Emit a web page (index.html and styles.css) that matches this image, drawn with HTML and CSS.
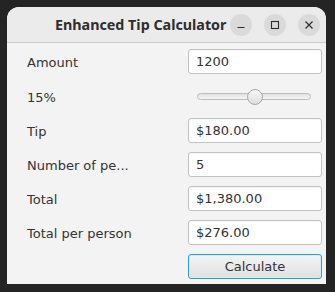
FILE: index.html
```html
<!DOCTYPE html>
<html>
<head>
<meta charset="utf-8">
<link rel="stylesheet" href="styles.css">
</head>
<body>
<div class="window">
  <div class="titlebar">
    <div class="title">Enhanced Tip Calculator</div>
    <div class="controls">
      <span class="ctl"><svg width="10" height="10" viewBox="0 0 10 10"><path d="M1.5 7.5h7" stroke="#2e2e2e" stroke-width="1.2" fill="none"/></svg></span>
      <span class="ctl"><svg width="10" height="10" viewBox="0 0 10 10"><rect x="1.5" y="1.5" width="7" height="7" stroke="#2e2e2e" stroke-width="1.1" fill="none"/></svg></span>
      <span class="ctl"><svg width="10" height="10" viewBox="0 0 10 10"><path d="M1.5 1.5l7 7M8.5 1.5l-7 7" stroke="#2e2e2e" stroke-width="1.2" fill="none"/></svg></span>
    </div>
  </div>
  <div class="form">
    <div class="label">Amount</div>
    <div class="field">1200</div>
    <div class="label">15%</div>
    <div class="slider"><div class="track"></div><div class="thumb"></div></div>
    <div class="label">Tip</div>
    <div class="field">$180.00</div>
    <div class="label">Number of pe...</div>
    <div class="field">5</div>
    <div class="label">Total</div>
    <div class="field">$1,380.00</div>
    <div class="label">Total per person</div>
    <div class="field">$276.00</div>
    <div class="label"></div>
    <div class="button">Calculate</div>
  </div>
</div>
</body>
</html>
```
FILE: styles.css
```css
html, body {
  margin: 0;
  padding: 0;
  background: #242424;
  width: 335px;
  height: 292px;
  overflow: hidden;
}
.window {
  margin: 7px 0 0 7px;
  width: 319px;
  height: 277px;
  background: #f3f3f3;
  border-radius: 12px 12px 0 0;
  overflow: hidden;
  font-family: "DejaVu Sans", sans-serif;
  color: #333333;
}
.titlebar {
  height: 35px;
  background: #ebebeb;
  border-bottom: 1px solid #cbcbcb;
  display: flex;
  align-items: center;
}
.title {
  flex: 1;
  padding-left: 48px;
  font-family: "Noto Sans", sans-serif;
  font-weight: 700;
  font-size: 14.3px;
  color: #2e2e2e;
  white-space: nowrap;
}
.controls {
  display: flex;
  gap: 12px;
  padding-right: 6px;
}
.ctl {
  width: 22px;
  height: 22px;
  border-radius: 50%;
  background: #dadada;
  display: flex;
  align-items: center;
  justify-content: center;
}
.ctl svg { display: block; }
.form {
  display: grid;
  grid-template-columns: 161px 134px;
  row-gap: 9px;
  padding: 6px 0 0 20px;
  align-items: center;
  font-size: 13px;
}
.label {
  white-space: nowrap;
  padding-top: 2px;
}
.field {
  box-sizing: border-box;
  height: 25px;
  background: #ffffff;
  border: 1px solid #c2c2c2;
  border-radius: 3px;
  padding-left: 7px;
  padding-top: 1px;
  line-height: 22px;
  box-shadow: inset 0 1px 1px rgba(0,0,0,0.04);
}
.slider {
  position: relative;
  height: 26px;
}
.track {
  position: absolute;
  left: 9px;
  right: 11px;
  top: 10px;
  height: 7px;
  box-sizing: border-box;
  border: 1px solid #bdbdbd;
  border-radius: 4px;
  background: linear-gradient(#e2e2e2, #f4f4f4);
}
.thumb {
  position: absolute;
  left: 59px;
  top: 6px;
  width: 16px;
  height: 16px;
  box-sizing: border-box;
  border-radius: 50%;
  border: 1px solid #a9a9a9;
  background: linear-gradient(#f7f7f7, #dedede);
}
.button {
  box-sizing: border-box;
  height: 25px;
  border: 1px solid #28a0d8;
  border-radius: 3px;
  box-shadow: inset 0 0 0 1px #d4ecf8;
  background: linear-gradient(#f4f4f4, #e0e0e0);
  text-align: center;
  padding-top: 1px;
  line-height: 22px;
}
```
